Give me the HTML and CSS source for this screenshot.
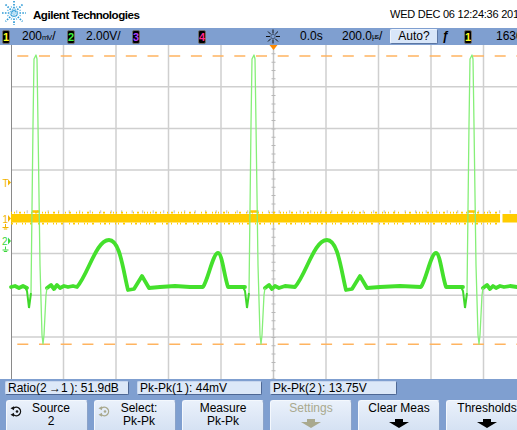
FILE: index.html
```html
<!DOCTYPE html>
<html>
<head>
<meta charset="utf-8">
<link rel="stylesheet" href="styles.css">
</head>
<body>
<div class="screen">
  <header class="top">
    <div class="brand">
      <svg class="spark" width="26" height="26" viewBox="0 0 26 26">
        <g stroke="#2f9bd6" stroke-width="1.7" stroke-dasharray="1.6 1.3" fill="none">
          <path d="M1 13H25M13 1V25M4.5 4.5L21.5 21.5M21.5 4.5L4.5 21.5"/>
          <path d="M13 13L20.4 16.1M13 13L16.1 20.4M13 13L9.9 20.4M13 13L5.6 16.1M13 13L5.6 9.9M13 13L9.9 5.6M13 13L16.1 5.6M13 13L20.4 9.9" stroke="#7cc3ea" stroke-width="1.2"/>
        </g>
        <circle cx="13" cy="13" r="1.6" fill="#bfe2f6"/>
      </svg>
      <span class="title">Agilent Technologies</span>
    </div>
    <div class="date">WED DEC 06 12:24:36 2017</div>
  </header>

  <div class="status">
    <div class="cell c1"><span class="chip cy">1</span><span class="val">200<span class="u">mV</span>/</span></div>
    <div class="cell c2"><span class="chip cg">2</span><span class="val">2.00V/</span></div>
    <div class="cell c3"><span class="chip cp">3</span></div>
    <div class="cell c4"><span class="chip cm">4</span></div>
    <div class="cell trig">
      <svg width="16" height="15" viewBox="0 0 16 15">
        <g stroke="#111" stroke-width="1" fill="none">
          <circle cx="8" cy="7.5" r="2.2" stroke="#4a5f80"/>
          <path d="M8 0.5V4.5M8 10.5V14.5M1 7.5H5M11 7.5H15M3 2.5L5.8 5.3M10.2 9.7L13 12.5M13 2.5L10.2 5.3M5.8 9.7L3 12.5"/>
        </g>
      </svg>
    </div>
    <div class="cell delay">0.0s</div>
    <div class="cell tb">200.0<span class="u">µs</span>/</div>
    <div class="auto">Auto?</div>
    <div class="slope">ƒ</div>
    <span class="chip cy">1</span>
    <div class="lvl">1630</div>
  </div>

  <div class="plot">
    <svg width="517" height="334" viewBox="0 0 517 334">
      <g stroke="#cfcfcf" stroke-width="1.5">
        <path d="M63.5 0V334M116 0V334M168.5 0V334M221 0V334M326 0V334M378.5 0V334M431 0V334M483.5 0V334"/>
        <path d="M11 41.7H517M11 83.4H517M11 125.1H517M11 208.5H517M11 250.2H517M11 291.9H517"/>
        <path d="M273.5 0V334" stroke="#c4c4c4"/>
      </g>
      <path d="M273.5 8.34V334" stroke="#b8b8b8" stroke-width="4" stroke-dasharray="1 7.34"/>
      <path d="M16.2 166.8H517" stroke="#c0c0c0" stroke-width="3" stroke-dasharray="1 9.5"/>
      <path d="M11.5 0V334" stroke="#8a8a8a" stroke-width="1"/>

      <!-- orange reference cursors -->
      <path d="M17.3 11H517M17.3 299.3H517" stroke="#ffb460" stroke-width="1.4" stroke-dasharray="11 10.7"/>
      <polygon points="269.5,0 277.5,0 273.5,5" fill="#ff8a00"/>

      <!-- channel 1 (yellow) -->
      <rect x="11" y="169" width="489" height="8.5" fill="#ffcc00"/>
      <rect x="502.5" y="169" width="15" height="8.5" fill="#ffcc00"/>
      <path d="M11 167.6H500" stroke="#ffcc00" stroke-width="1.6" stroke-dasharray="1 2 1 4 2 3 1 6 1 3 2 5 1 2"/>
      <path d="M11 178.6H500" stroke="#ffcc00" stroke-width="1.6" stroke-dasharray="2 3 1 5 1 2 1 4 2 6 1 3"/>
      <path d="M32 166.5H40M250 166.5H258M468 166.5H476" stroke="#ffc400" stroke-width="2.5"/>

      <!-- channel 2 (green) slow parts -->
      <g fill="none" stroke="#44e02c" stroke-width="3.8" stroke-linejoin="round" stroke-linecap="round">
        <path d="M11 242L15 241L19 243L23 241L27 243"/>
        <path d="M47 243L51 240L54 244L57 240L60 243L64 241L68 242L73 241L77 242C88 230 96 195 109 195C120 195 123 225 128 245L134 244L142 231L149 243L160 242L175 241L190 242L203 242C208 235 213 208 218 208C222 208 224 230 228 242L245 242"/>
        <path d="M265 243L269 240L272 244L275 241L279 243L285 241L295 242C306 230 314 195 327 195C338 195 341 225 346 245L352 244L360 231L367 243L380 242L400 241L421 242C426 235 431 208 436 208C440 208 442 230 446 242L463 242"/>
        <path d="M483 243L487 240L490 244L493 241L496 243L500 241L504 242L510 241L517 242"/>
      </g>
      <!-- QRS spikes -->
      <g fill="none" stroke="#3fd82a" stroke-width="2">
        <path d="M25 242L27 246L29 263L31 248"/>
        <path d="M243 242L245 246L247 263L249 248"/>
        <path d="M461 242L463 246L465 263L467 248"/>
      </g>
      <g fill="none" stroke="#86ef78" stroke-width="1.3" stroke-linejoin="round">
        <path d="M31 248L33 80L34 14L36 10L37 14L38 80L40 220L42 290L43 299L44 290L46 250L47 243"/>
        <path d="M249 248L251 80L252 14L254 10L255 14L256 80L258 220L260 290L261 299L262 290L264 250L265 243"/>
        <path d="M467 248L469 80L470 14L472 10L473 14L474 80L476 220L478 290L479 299L480 290L482 250L483 243"/>
      </g>

      <!-- left markers -->
      <text x="2.5" y="142" class="mk" fill="#f2b400">T</text>
      <polygon points="8,134.5 11,137.5 8,140.5" fill="#f2b400"/>
      <text x="2.5" y="177.5" class="mk" fill="#f2b400">1</text>
      <polygon points="8,170 11,173.5 8,177" fill="#f2b400"/>
      <path d="M5.5 179V182M2.5 182.5H8.5M3.8 184H7.2" stroke="#f2b400" stroke-width="1"/>
      <text x="2" y="200" class="mk" fill="#3cd63c">2</text>
      <polygon points="8,192.5 11,196 8,199.5" fill="#3cd63c"/>
      <path d="M5.5 201.5V204.5M2.5 205H8.5M3.8 206.5H7.2" stroke="#3cd63c" stroke-width="1"/>
    </svg>
  </div>

  <div class="meas">
    <div class="mbox w1">Ratio(2&thinsp;→1&thinsp;): 51.9dB</div>
    <div class="mbox w2">Pk-Pk(1&thinsp;): 44mV</div>
    <div class="mbox w3">Pk-Pk(2&thinsp;): 13.75V</div>
  </div>

  <div class="keys">
    <div class="key">
      <svg class="knob" width="15" height="11" viewBox="0 0 15 11">
        <path d="M4.5 2.2A4.3 4.3 0 1 1 4.5 8.8" fill="none" stroke="#111" stroke-width="1.3"/>
        <path d="M1.5 2.2L5 0.2L5 4.2Z M1.5 8.8L5 6.8L5 10.8Z" fill="#111"/>
        <circle cx="8" cy="5.5" r="1.3" fill="#111"/>
      </svg>
      <div class="lbl">Source<br>2</div>
    </div>
    <div class="key">
      <svg class="knob" width="15" height="11" viewBox="0 0 15 11">
        <path d="M4.5 2.2A4.3 4.3 0 1 1 4.5 8.8" fill="none" stroke="#a9a98e" stroke-width="1.3"/>
        <path d="M1.5 2.2L5 0.2L5 4.2Z M1.5 8.8L5 6.8L5 10.8Z" fill="#a9a98e"/>
        <circle cx="8" cy="5.5" r="1.3" fill="#a9a98e"/>
      </svg>
      <div class="lbl">Select:<br>Pk-Pk</div>
    </div>
    <div class="key"><div class="lbl">Measure<br>Pk-Pk</div></div>
    <div class="key col dim">
      <div class="lbl">Settings</div>
      <svg class="arrow" width="20" height="9" viewBox="0 0 20 9"><polygon points="6,0 14,0 14,3 20,3 10,9 0,3 6,3" fill="#a9a98e"/></svg>
    </div>
    <div class="key col">
      <div class="lbl">Clear Meas</div>
      <svg class="arrow" width="20" height="9" viewBox="0 0 20 9"><polygon points="6,0 14,0 14,3 20,3 10,9 0,3 6,3" fill="#000"/></svg>
    </div>
    <div class="key col">
      <div class="lbl">Thresholds</div>
      <svg class="arrow" width="20" height="9" viewBox="0 0 20 9"><polygon points="6,0 14,0 14,3 20,3 10,9 0,3 6,3" fill="#000"/></svg>
    </div>
  </div>
</div>
</body>
</html>
```

FILE: styles.css
```css
* { box-sizing: border-box; }
html, body {
  margin: 0;
  padding: 0;
  background: #ffffff;
}
body {
  font-family: "Liberation Sans", Arial, sans-serif;
  font-size: 12px;
  color: #000;
}
.screen {
  width: 517px;
  height: 430px;
  overflow: hidden;
  background: #ffffff;
}

/* header */
.top {
  height: 28px;
  display: flex;
  align-items: center;
  overflow: hidden;
  white-space: nowrap;
}
.brand {
  width: 390px;
  flex: none;
  display: flex;
  align-items: center;
}
.spark {
  margin-left: 1px;
  margin-top: -2px;
  flex: none;
}
.title {
  margin-left: 6px;
  font-weight: bold;
  font-size: 11.6px;
  letter-spacing: -0.5px;
}
.date {
  flex: none;
  font-size: 11px;
  letter-spacing: -0.25px;
}

/* status bar */
.status {
  height: 17px;
  background: #7f9fd0;
  display: flex;
  align-items: center;
  padding-left: 2px;
  white-space: nowrap;
  overflow: hidden;
  line-height: 17px;
}
.cell {
  flex: none;
  display: flex;
  align-items: center;
  height: 17px;
}
.c1 { width: 65px; }
.c2 { width: 65px; }
.c3 { width: 66px; }
.c4 { width: 62px; }
.trig { width: 40px; padding-left: 5px; }
.delay { width: 42px; }
.tb { width: 48px; }
.val { margin-left: 12px; }
.c2 .val { margin-left: 11px; }
.u {
  font-size: 7.5px;
  letter-spacing: -1px;
  margin-right: 1px;
}
.chip {
  flex: none;
  display: inline-block;
  width: 8px;
  height: 14px;
  background: #000;
  border: 1px solid #6d6d6d;
  border-radius: 2px;
  font-size: 11px;
  line-height: 12px;
  text-align: center;
  font-weight: bold;
}
.cy { color: #ffff1e; }
.cg { color: #3ef03e; }
.cp { color: #b040ff; }
.cm { color: #ff2a8c; }
.auto {
  flex: none;
  width: 48px;
  height: 15px;
  line-height: 13px;
  text-align: center;
  background: #d8e6f9;
  border: 1px solid #5b76a3;
  border-top-color: #eef4fd;
  border-left-color: #eef4fd;
  border-radius: 2px;
}
.slope {
  flex: none;
  width: 22px;
  margin-left: 4px;
  font-weight: bold;
  font-style: italic;
}
.lvl {
  flex: none;
  margin-left: 24px;
}

/* plot */
.plot {
  height: 334px;
  background: #ffffff;
}
.plot svg { display: block; }
.mk {
  font-family: "Liberation Sans", Arial, sans-serif;
  font-size: 10px;
}

/* measurements */
.meas {
  height: 21px;
  background: #7f9fd0;
  display: flex;
  gap: 8px;
  padding: 2px 0 0 5px;
}
.mbox {
  height: 14px;
  background: #dce8f8;
  border: 1px solid #4d6794;
  border-top-color: #c7d6ee;
  border-left-color: #c7d6ee;
  border-radius: 2px;
  padding-left: 2px;
  line-height: 12px;
  white-space: nowrap;
}
.w1 { width: 124px; }
.w2 { width: 125px; }
.w3 { width: 127px; }

/* softkeys */
.keys {
  height: 30px;
  background: #7f9fd0;
  display: flex;
  gap: 6px;
  padding-left: 6px;
  overflow: hidden;
}
.key {
  flex: none;
  width: 82px;
  height: 34px;
  display: flex;
  align-items: flex-start;
  background: linear-gradient(#eaf1fb, #d3e0f2);
  border: 1px solid #8aa2c8;
  border-top-color: #f4f8fd;
  border-left-color: #f4f8fd;
  border-radius: 3px;
  padding-top: 1px;
}
.knob {
  flex: none;
  margin: 4px 0 0 2px;
}
.lbl {
  flex: 1;
  text-align: center;
  line-height: 12.5px;
  white-space: nowrap;
}
.knob + .lbl { margin-left: -9px; }
.key.col {
  flex-direction: column;
  align-items: center;
}
.key.col .lbl { flex: none; }
.arrow { margin-top: 4px; display: block; }
.dim .lbl { color: #a9a98e; }
```
